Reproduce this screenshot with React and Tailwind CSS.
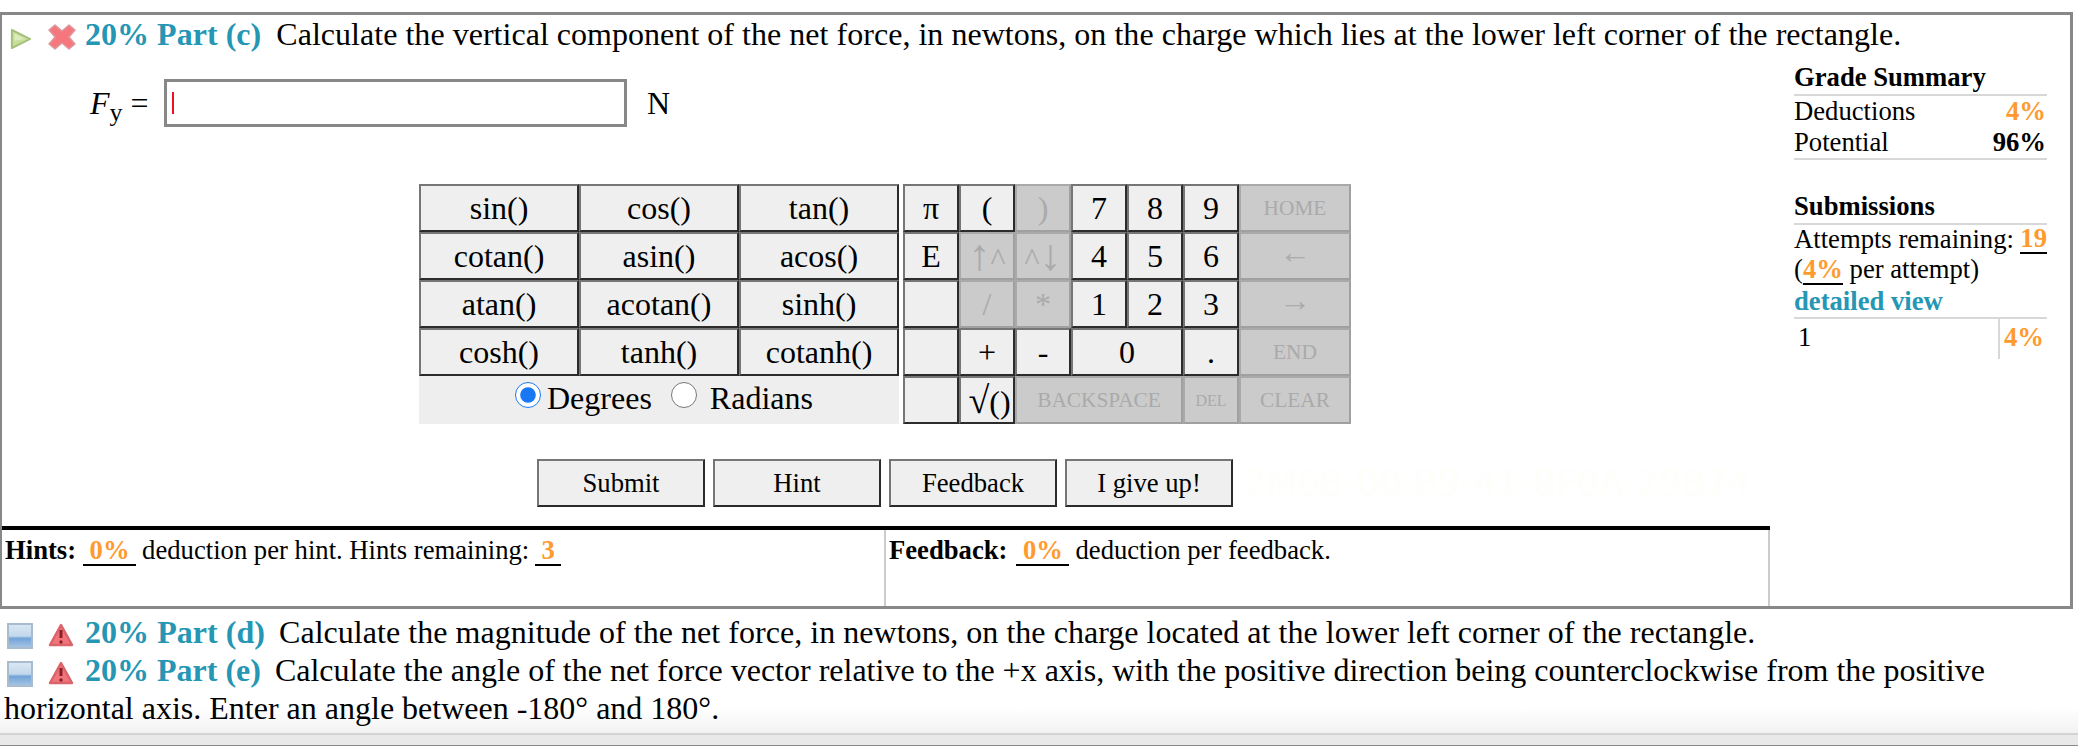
const serif = "font-['Liberation_Serif','Times_New_Roman',serif]"

const fnRows = ['sin()', 'cos()', 'tan()', 'cotan()', 'asin()', 'acos()', 'atan()', 'acotan()', 'sinh()', 'cosh()', 'tanh()', 'cotanh()']

const on = 'bg-[#efefef] border-2 border-t-[#767676] border-l-[#767676] border-b-[#2b2b2b] border-r-[#2b2b2b] text-black'
const off = 'bg-[#cbcbcb] border-2 border-t-[#a9a9a9] border-l-[#a9a9a9] border-b-[#a0a0a0] border-r-[#a0a0a0] text-[#aaaaaa]'

const bigArrow = <span className="text-[44px] leading-none">↑</span>
const bigArrowDown = <span className="text-[44px] leading-none">↓</span>

// keypad is a 7 column grid, 56px columns and a 112px one at the end
const keys = [
  { t: 'π' }, { t: '(' }, { t: ')', off: true }, { t: '7' }, { t: '8' }, { t: '9' }, { t: 'HOME', off: true, small: true },
  { t: 'E' }, { t: <>{bigArrow}^</>, off: true }, { t: <>^{bigArrowDown}</>, off: true }, { t: '4' }, { t: '5' }, { t: '6' }, { t: '←', off: true, arrow: true },
  { t: '' }, { t: '/', off: true }, { t: '*', off: true }, { t: '1' }, { t: '2' }, { t: '3' }, { t: '→', off: true, arrow: true },
  { t: '' }, { t: '+' }, { t: '-' }, { t: '0', span: 'col-span-2' }, { t: '.' }, { t: 'END', off: true, small: true },
  { t: '' }, { t: <span className="pl-[5px]"><span className="text-[38px] leading-none">√</span>()</span> }, { t: 'BACKSPACE', off: true, small: true, span: 'col-span-3' }, { t: 'DEL', off: true, tiny: true }, { t: 'CLEAR', off: true, small: true },
]

function keySize(k) {
  if (k.small) return 'text-[21.33px] pt-[1px]'
  if (k.tiny) return 'text-[16px] pt-[1px]'
  if (k.arrow) return 'text-[32px] pb-[8px]'
  return 'text-[32px]'
}

function PlayIcon() {
  return (
    <svg width="22" height="22" viewBox="0 0 24 24" className="blur-[0.7px]">
      <path d="M2 2 L22 12 L2 22 Z" fill="#c6df98" stroke="#a3bd7a" strokeWidth="2" strokeLinejoin="round" />
      <path d="M5 6 L16 12 L5 14 Z" fill="#dcedbc" />
    </svg>
  )
}

function CrossIcon() {
  return (
    <svg width="28" height="26" viewBox="0 0 28 26" className="blur-[0.7px]">
      <path d="M7 1 L14 7 L21 1 L27 6 L21 13 L27 20 L21 25 L14 19 L7 25 L1 20 L7 13 L1 6 Z" fill="#f5777d" stroke="#dc9a9d" strokeWidth="1.5" strokeLinejoin="round" />
    </svg>
  )
}

function BoxIcon() {
  return (
    <svg width="26" height="26" viewBox="0 0 26 26" className="blur-[0.5px]">
      <defs>
        <linearGradient id="boxfill" x1="0" y1="0" x2="0" y2="1">
          <stop offset="0" stopColor="#dbe8f4" />
          <stop offset="0.5" stopColor="#c3d8ec" />
          <stop offset="0.6" stopColor="#73a3d6" />
          <stop offset="1" stopColor="#a8c6e6" />
        </linearGradient>
      </defs>
      <rect x="1" y="1" width="24" height="24" fill="url(#boxfill)" stroke="#a9bccd" strokeWidth="2" />
    </svg>
  )
}

function WarnIcon() {
  return (
    <svg width="26" height="24" viewBox="0 0 26 24" className="blur-[0.5px]">
      <path d="M13 2 L24 22 L2 22 Z" fill="#f1747a" stroke="#d9646b" strokeWidth="2.5" strokeLinejoin="round" />
      <path d="M13 7 L13 15" stroke="#8c1f28" strokeWidth="3" />
      <circle cx="13" cy="19" r="1.7" fill="#8c1f28" />
    </svg>
  )
}

function Uline({ children, className = '' }) {
  return <span className={`inline-block border-b-2 border-black font-bold text-[#ff9a2e] leading-[28px] ${className}`}>{children}</span>
}

export default function App() {
  return (
    <div className={`${serif} w-[2078px] h-[746px] bg-white text-black overflow-hidden flex flex-col pt-[12px]`}>
      {/* open part */}
      <div className="w-[2073px] h-[597px] border-[#888888] border-t-[3px] border-l-2 border-r-[3px] border-b-[3px] flex flex-col">
        <div className="h-[30px] mt-[4px] flex items-center text-[32px] leading-[30px] whitespace-nowrap tracking-[0.03px]">
          <span className="ml-[8px] w-[38px] flex mt-[10px]"><PlayIcon /></span>
          <span className="w-[28px] flex mt-[6px]"><CrossIcon /></span>
          <span className="ml-[9px] font-bold text-[#2596b4]">20% Part (c)</span>
          <span className="ml-[15px]">Calculate the vertical component of the net force, in newtons, on the charge which lies at the lower left corner of the rectangle.</span>
        </div>

        <div className="flex flex-1">
          <div className="w-[1768px] flex flex-col">
            {/* answer */}
            <div className="h-[48px] mt-[30px] flex items-center text-[32px]">
              <span className="ml-[88px] w-[74px] whitespace-nowrap"><i>F</i><sub className="text-[26px]">y</sub> =</span>
              <div className="w-[463px] h-[48px] border-[3px] border-[#888888] flex items-center pl-[5px]">
                <div className="w-[2px] h-[22px] bg-[#ee1122]" />
              </div>
              <span className="ml-[20px]">N</span>
            </div>

            {/* keypad */}
            <div className="mt-[57px] ml-[417px] flex gap-[4px]">
              <div className="w-[480px] flex flex-col">
                <div className="grid grid-cols-3">
                  {fnRows.map((f) => (
                    <button key={f} className={`h-[48px] text-[32px] leading-none ${on}`}>{f}</button>
                  ))}
                </div>
                <div className="h-[48px] bg-[#eeeeee] flex items-center text-[32px] pb-[4px]">
                  <input type="radio" name="unit" defaultChecked className="w-[26px] h-[26px] ml-[96px] -mt-[6px] accent-[#1877f2]" />
                  <span className="ml-[6px]">Degrees</span>
                  <input type="radio" name="unit" className="w-[26px] h-[26px] ml-[19px] -mt-[6px]" />
                  <span className="ml-[13px]">Radians</span>
                </div>
              </div>
              <div className="w-[448px] grid grid-cols-[56px_56px_56px_56px_56px_56px_112px] grid-rows-[repeat(5,48px)]">
                {keys.map((k, i) => (
                  <button
                    key={i}
                    className={`${k.off ? off : on} ${k.span || ''} ${keySize(k)} leading-none whitespace-nowrap overflow-hidden`}
                  >
                    {k.t}
                  </button>
                ))}
              </div>
            </div>

            {/* actions */}
            <div className="mt-[35px] ml-[535px] flex gap-[8px] items-center">
              {['Submit', 'Hint', 'Feedback', 'I give up!'].map((b) => (
                <button key={b} className={`w-[168px] h-[48px] text-[26.67px] leading-none ${on}`}>{b}</button>
              ))}
              <span className="ml-[2px] font-['DejaVu_Sans',sans-serif] text-[36px] leading-none text-[#fefefb] whitespace-nowrap">2M68-00-B9-41-8F0A-29874</span>
            </div>

            {/* hints / feedback */}
            <div className="mt-[19px] flex-1 border-t-4 border-black flex text-[26.67px] leading-[28px]">
              <div className="w-[884px] pl-[3px] pt-[6px] border-r-2 border-[#cccccc] whitespace-nowrap">
                <b>Hints:</b>
                <Uline className="ml-[7px] w-[53px] text-center">0%</Uline>
                <span className="ml-[6px]">deduction per hint. Hints remaining:</span>
                <Uline className="ml-[6px] w-[26px] text-center">3</Uline>
              </div>
              <div className="flex-1 pl-[3px] pt-[6px] border-r-2 border-[#cccccc] whitespace-nowrap">
                <b>Feedback:</b>
                <Uline className="ml-[9px] w-[53px] text-center">0%</Uline>
                <span className="ml-[6px]">deduction per feedback.</span>
              </div>
            </div>
          </div>

          {/* grade summary */}
          <aside className="ml-[24px] w-[253px] pt-[13px] text-[26.67px] leading-[31px]">
            <div className="font-bold border-b-2 border-[#d8d8d8] pb-[1px]">Grade Summary</div>
            <div className="flex justify-between pr-[1px]"><span>Deductions</span><span className="font-bold text-[#ff9a2e]">4%</span></div>
            <div className="flex justify-between pr-[1px] border-b-2 border-[#d8d8d8]"><span>Potential</span><span className="font-bold">96%</span></div>
            <div className="mt-[31px] font-bold border-b-2 border-[#d8d8d8] pb-[1px]">Submissions</div>
            <div className="-mt-[1px] flex justify-between leading-[30px] h-[30px]"><span>Attempts remaining:</span><Uline>19</Uline></div>
            <div className="leading-[30px] h-[30px]">(<Uline className="w-[40px]">4%</Uline> per attempt)</div>
            <div className="leading-[30px] font-bold text-[#2596b4] border-b-2 border-[#d8d8d8] pt-[2px] pb-[1px]">detailed view</div>
            <div className="flex h-[40px]">
              <span className="w-[204px] pl-[4px] pt-[3px]">1</span>
              <span className="flex-1 border-l-2 border-[#d8d8d8] pl-[4px] pt-[3px] font-bold text-[#ff9a2e]">4%</span>
            </div>
          </aside>
        </div>
      </div>

      {/* closed parts */}
      <div className="h-[126px] pt-[4px] bg-gradient-to-b from-white from-[80%] to-[#f2f2f2] border-b-[2px] border-[#d4d4d4] text-[32px] leading-[38px]">
        <div className="flex items-center h-[38px] whitespace-nowrap tracking-[0.04px]">
          <span className="ml-[7px] w-[41px] flex mt-[7px]"><BoxIcon /></span>
          <span className="w-[26px] flex mt-[6px]"><WarnIcon /></span>
          <span className="ml-[11px] font-bold text-[#2596b4]">20% Part (d)</span>
          <span className="ml-[14px]">Calculate the magnitude of the net force, in newtons, on the charge located at the lower left corner of the rectangle.</span>
        </div>
        <div className="flex items-center h-[38px] whitespace-nowrap">
          <span className="ml-[7px] w-[41px] flex mt-[7px]"><BoxIcon /></span>
          <span className="w-[26px] flex mt-[6px]"><WarnIcon /></span>
          <span className="ml-[11px] font-bold text-[#2596b4]">20% Part (e)</span>
          <span className="ml-[14px]">Calculate the angle of the net force vector relative to the +x axis, with the positive direction being counterclockwise from the positive</span>
        </div>
        <div className="pl-[4px] whitespace-nowrap">horizontal axis. Enter an angle between -180° and 180°.</div>
      </div>
      <div className="flex-1 bg-[#e9e9e9] border-b border-[#8a8a8a]" />
    </div>
  )
}
